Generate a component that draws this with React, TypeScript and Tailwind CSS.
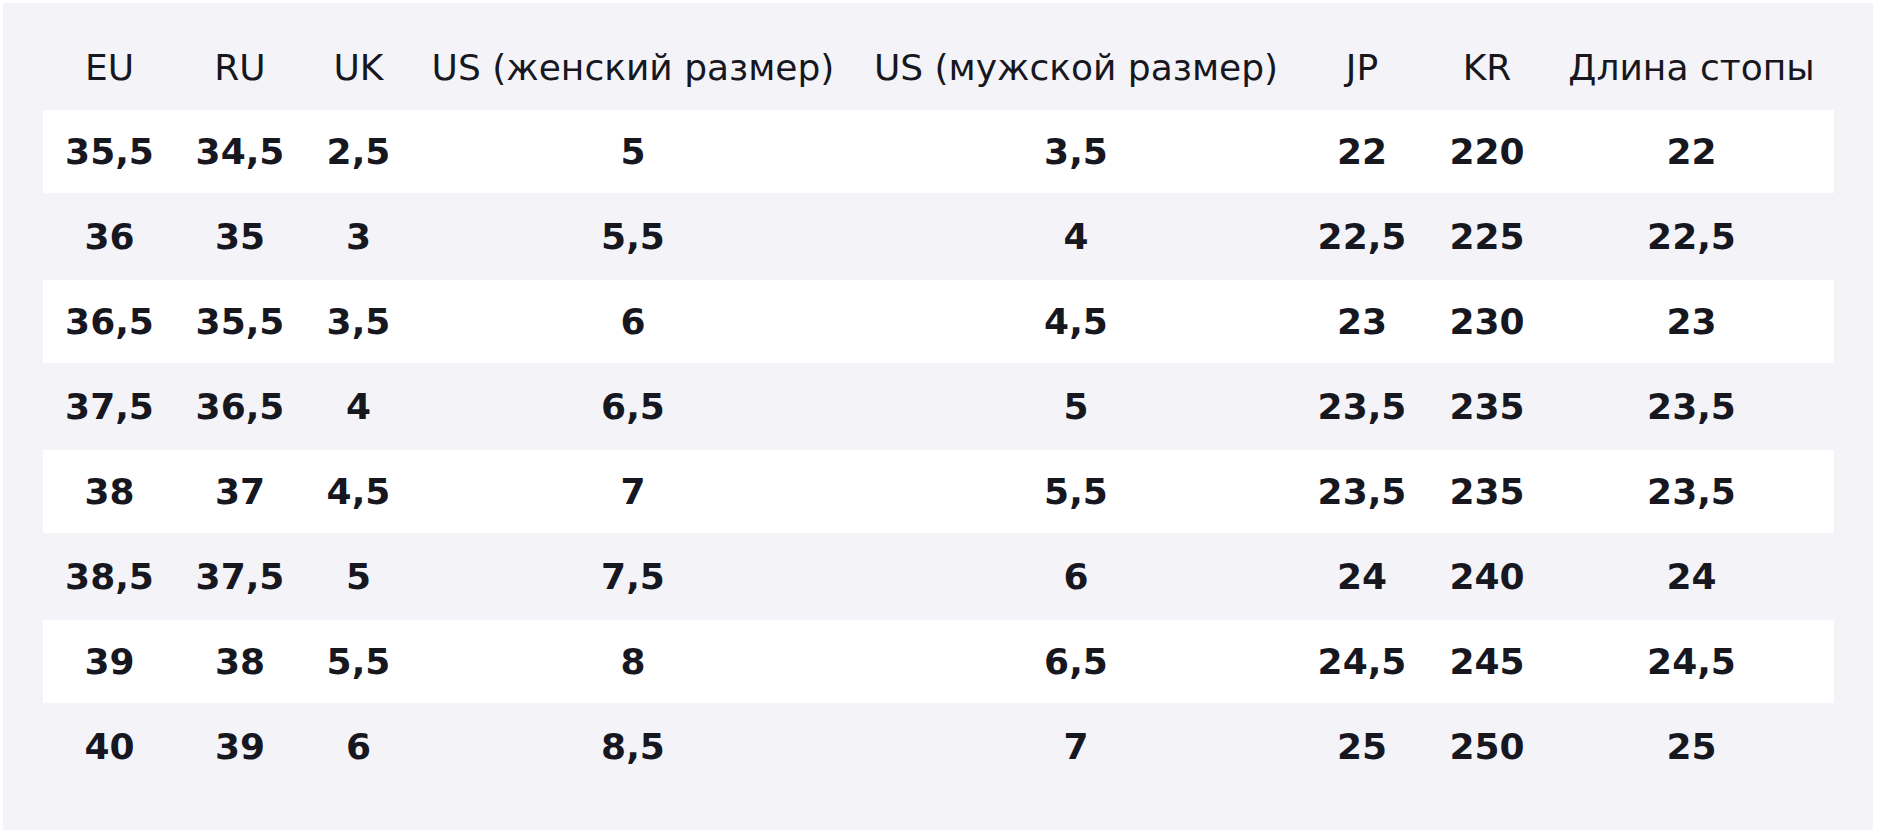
import React from "react";

const headers = [
  "EU",
  "RU",
  "UK",
  "US (женский размер)",
  "US (мужской размер)",
  "JP",
  "KR",
  "Длина стопы",
];

const rows: string[][] = [
  ["35,5", "34,5", "2,5", "5", "3,5", "22", "220", "22"],
  ["36", "35", "3", "5,5", "4", "22,5", "225", "22,5"],
  ["36,5", "35,5", "3,5", "6", "4,5", "23", "230", "23"],
  ["37,5", "36,5", "4", "6,5", "5", "23,5", "235", "23,5"],
  ["38", "37", "4,5", "7", "5,5", "23,5", "235", "23,5"],
  ["38,5", "37,5", "5", "7,5", "6", "24", "240", "24"],
  ["39", "38", "5,5", "8", "6,5", "24,5", "245", "24,5"],
  ["40", "39", "6", "8,5", "7", "25", "250", "25"],
];

const cols = "grid grid-cols-[133px_128px_109px_440px_446px_126px_124px_285px]";

export default function App() {
  return (
    <div
      className="w-[1877px] h-[833px] bg-white pt-[3px] pl-[3px] pr-[4px] pb-[3px] text-[#17171f]"
      style={{ fontFamily: '"DejaVu Sans", "Noto Sans", sans-serif' }}
    >
      <div className="h-[827px] w-[1870px] bg-[#f4f4f8] pl-[40px] pt-[43px]">
        <div className="w-[1791px]">
          <div className={`${cols} h-[64px] items-start`}>
            {headers.map((h) => (
              <div
                key={h}
                className="text-center text-[36px] leading-[43px] font-normal whitespace-nowrap"
              >
                {h}
              </div>
            ))}
          </div>
          {rows.map((r, i) => (
            <div
              key={i}
              className={`${cols} items-center ${
                i % 2 === 0 ? "h-[83px] bg-white" : "h-[87px] bg-transparent"
              }`}
            >
              {r.map((c, j) => (
                <div
                  key={j}
                  className="text-center text-[36px] leading-[43px] font-bold whitespace-nowrap"
                >
                  {c}
                </div>
              ))}
            </div>
          ))}
        </div>
      </div>
    </div>
  );
}
